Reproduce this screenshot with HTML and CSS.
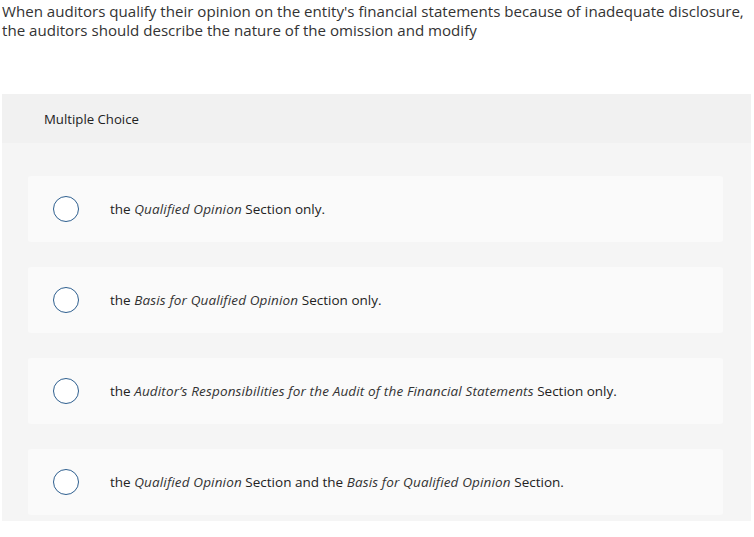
FILE: index.html
```html
<!DOCTYPE html>
<html>
<head>
<meta charset="utf-8">
<link rel="stylesheet" href="styles.css">
</head>
<body>
<p class="question">When auditors qualify their opinion on the entity's financial statements because of inadequate disclosure, the auditors should describe the nature of the omission and modify</p>
<div class="panel">
  <div class="panel-head">Multiple Choice</div>
  <div class="panel-body">
    <div class="option"><span class="radio"></span><span class="label">the <i>Qualified Opinion</i> Section only.</span></div>
    <div class="option"><span class="radio"></span><span class="label">the <i>Basis for Qualified Opinion</i> Section only.</span></div>
    <div class="option"><span class="radio"></span><span class="label">the <i>Auditor’s Responsibilities for the Audit of the Financial Statements</i> Section only.</span></div>
    <div class="option"><span class="radio"></span><span class="label">the <i>Qualified Opinion</i> Section and the <i>Basis for Qualified Opinion</i> Section.</span></div>
  </div>
</div>
</body>
</html>
```
FILE: styles.css
```css
html, body { margin: 0; padding: 0; background: #fff; }
body { font-family: "Open Sans", Lato, sans-serif; color: #333; font-variant-ligatures: none; }
.question {
  margin: 0;
  padding: 2px 4px 0 2px;
  font-size: 15.1px;
  line-height: 19px;
  color: #333;
}
.panel {
  margin: 54px 0 0 2px;
  width: 749px;
  background: #f5f5f5;
}
.panel-head {
  height: 49px;
  background: #f1f1f1;
  display: flex;
  align-items: center;
  padding-left: 42px;
  font-size: 13.2px;
  color: #222;
}
.panel-body {
  padding: 33px 28px 6px 26px;
  display: flex;
  flex-direction: column;
  gap: 25px;
}
.option {
  height: 66px;
  background: #fafafa;
  border-radius: 3px;
  display: flex;
  align-items: center;
  padding-left: 25px;
}
.radio {
  width: 24px;
  height: 24px;
  border: 1.5px solid #2e5f8f;
  border-radius: 50%;
  background: #fff;
  flex: none;
}
.label {
  margin-left: 31px;
  font-size: 13.5px;
  color: #222;
}
.label i { color: #333; letter-spacing: 0.15px; }
```
